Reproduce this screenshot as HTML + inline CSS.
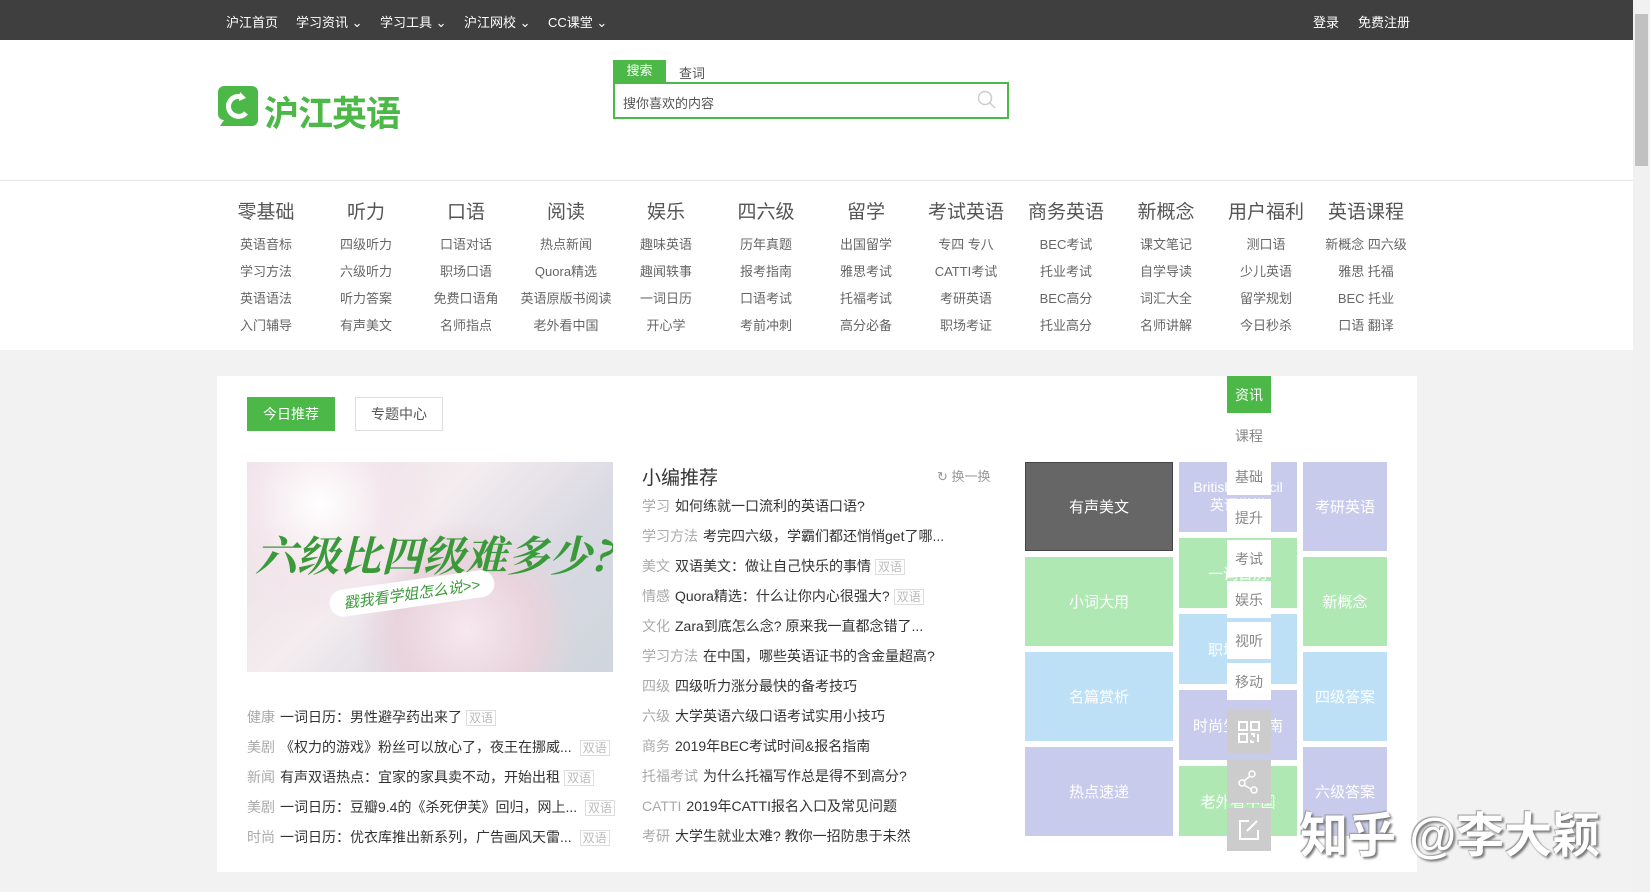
<!DOCTYPE html>
<html><head><meta charset="utf-8">
<style>
*{margin:0;padding:0;box-sizing:border-box}
body{width:1650px;height:892px;overflow:hidden;background:#f2f2f2;font-family:"Liberation Sans","Noto Sans CJK SC",sans-serif;position:relative;color:#333}
.a{position:absolute;white-space:nowrap}
.top{left:0;top:0;width:1633px;height:40px;background:#3f3f3f}
.top span{position:absolute;top:12px;color:#fff;font-size:13px}
.hdr{left:0;top:40px;width:1633px;height:310px;background:#fff;border-bottom:0}
.line{left:0;top:180px;width:1633px;height:1px;background:#e6e6e6}
.cat{font-size:19px;color:#555;text-align:center;width:110px}
.sub{font-size:13px;color:#666;text-align:center;width:110px}
.card{left:217px;top:376px;width:1200px;height:496px;background:#fff}
.r{font-size:14px;color:#333}
.r div{height:30px;line-height:30px;overflow:hidden}
.r i{font-style:normal;color:#aaa;margin-right:5px}
.r b{font-weight:normal;border:1px solid #ddd;color:#bbb;font-size:12px;padding:0 2px;margin-left:4px;display:inline-block;line-height:14px;vertical-align:middle}
.t{color:#fff;font-size:15px;display:flex;align-items:center;justify-content:center;text-align:center}
.sn{left:1227px;width:44px;height:37px;background:#fff;color:#888;font-size:14px;display:flex;align-items:center;justify-content:center}
</style></head><body>
<div class="a top">
<span style="left:226px">沪江首页</span>
<span style="left:296px">学习资讯 ⌄</span>
<span style="left:380px">学习工具 ⌄</span>
<span style="left:464px">沪江网校 ⌄</span>
<span style="left:548px">CC课堂 ⌄</span>
<span style="left:1313px">登录</span>
<span style="left:1358px">免费注册</span>
</div>
<div class="a hdr"></div>
<div class="a line" style="top:180px"></div>
<svg class="a" style="left:216px;top:84px" width="44" height="44" viewBox="0 0 44 44"><path d="M8 2h28a6 6 0 0 1 6 6v28a6 6 0 0 1-6 6H4l4-6a6 6 0 0 1-6-6V8a6 6 0 0 1 6-6z" fill="#4cb848"/><path d="M26 13a10 10 0 1 0 4 16" stroke="#fff" stroke-width="5" fill="none"/><path d="M24 8l6 6-7 3z" fill="#fff"/></svg>
<div class="a" style="left:264px;top:86px;font-size:35px;color:#4cb848;letter-spacing:-1px;font-weight:bold">沪江英语</div>
<div class="a" style="left:613px;top:60px;width:53px;height:22px;background:#4cb848;color:#fff;font-size:13px;text-align:center;line-height:22px">搜索</div>
<div class="a" style="left:679px;top:63px;font-size:13px;color:#555">查词</div>
<div class="a" style="left:613px;top:82px;width:396px;height:37px;border:2px solid #4cb848;background:#fff"></div>
<div class="a" style="left:623px;top:93px;font-size:13px;color:#555">搜你喜欢的内容</div>
<svg class="a" style="left:977px;top:90px" width="20" height="20"><circle cx="8" cy="8" r="6.5" stroke="#ccc" stroke-width="1.5" fill="none"/><path d="M13 13l5 5" stroke="#ccc" stroke-width="1.5"/></svg>
<div id="cats"></div>
<script>
var cats=[["零基础","英语音标","学习方法","英语语法","入门辅导"],["听力","四级听力","六级听力","听力答案","有声美文"],["口语","口语对话","职场口语","免费口语角","名师指点"],["阅读","热点新闻","Quora精选","英语原版书阅读","老外看中国"],["娱乐","趣味英语","趣闻轶事","一词日历","开心学"],["四六级","历年真题","报考指南","口语考试","考前冲刺"],["留学","出国留学","雅思考试","托福考试","高分必备"],["考试英语","专四 专八","CATTI考试","考研英语","职场考证"],["商务英语","BEC考试","托业考试","BEC高分","托业高分"],["新概念","课文笔记","自学导读","词汇大全","名师讲解"],["用户福利","测口语","少儿英语","留学规划","今日秒杀"],["英语课程","新概念 四六级","雅思 托福","BEC 托业","口语 翻译"]];
var h="",ys=[243,270,297,324];
cats.forEach(function(c,i){var x=211+i*100;h+='<div class="a cat" style="left:'+x+'px;top:197px">'+c[0]+'</div>';for(var j=1;j<5;j++)h+='<div class="a sub" style="left:'+x+'px;top:'+(ys[j-1]-9)+'px">'+c[j]+'</div>';});
document.getElementById("cats").innerHTML=h;
</script>
<div class="a card"></div>
<div class="a" style="left:247px;top:397px;width:88px;height:34px;background:#4cb848;color:#fff;font-size:14px;text-align:center;line-height:34px">今日推荐</div>
<div class="a" style="left:355px;top:397px;width:88px;height:34px;border:1px solid #ddd;color:#555;font-size:14px;text-align:center;line-height:32px">专题中心</div>
<div class="a" style="left:247px;top:462px;width:366px;height:210px;background:radial-gradient(circle at 20% 20%,#fff 0,#f3e6ec 20%,transparent 35%),radial-gradient(circle at 60% 80%,#f6e8ee 0,#e9d3dc 25%,transparent 40%),linear-gradient(135deg,#e8dde3,#f4ecef 40%,#d9d9e2 70%,#cfd6dc);overflow:hidden">
<div class="a" style="left:8px;top:62px;font-size:42px;color:#3a9a3a;font-family:'Noto Serif CJK SC',serif;font-style:italic;font-weight:bold">六级比四级难多少?</div>
<div class="a" style="left:82px;top:118px;background:#fff;border-radius:14px;padding:3px 14px;font-size:15px;color:#3a9a3a;transform:rotate(-8deg);font-style:italic">戳我看学姐怎么说>></div>
</div>
<div class="a" style="left:642px;top:463px;font-size:19px;color:#333">小编推荐</div>
<div class="a" style="left:937px;top:466px;font-size:13px;color:#999">↻ 换一换</div>
<div class="a r" style="left:642px;top:491px">
<div><i>学习</i>如何练就一口流利的英语口语?</div>
<div><i>学习方法</i>考完四六级，学霸们都还悄悄get了哪...</div>
<div><i>美文</i>双语美文：做让自己快乐的事情<b>双语</b></div>
<div><i>情感</i>Quora精选：什么让你内心很强大?<b>双语</b></div>
<div><i>文化</i>Zara到底怎么念? 原来我一直都念错了...</div>
<div><i>学习方法</i>在中国，哪些英语证书的含金量超高?</div>
<div><i>四级</i>四级听力涨分最快的备考技巧</div>
<div><i>六级</i>大学英语六级口语考试实用小技巧</div>
<div><i>商务</i>2019年BEC考试时间&amp;报名指南</div>
<div><i>托福考试</i>为什么托福写作总是得不到高分?</div>
<div><i>CATTI</i>2019年CATTI报名入口及常见问题</div>
<div><i>考研</i>大学生就业太难? 教你一招防患于未然</div>
</div>
<div class="a r" style="left:247px;top:702px">
<div><i>健康</i>一词日历：男性避孕药出来了<b>双语</b></div>
<div><i>美剧</i>《权力的游戏》粉丝可以放心了，夜王在挪威... <b>双语</b></div>
<div><i>新闻</i>有声双语热点：宜家的家具卖不动，开始出租<b>双语</b></div>
<div><i>美剧</i>一词日历：豆瓣9.4的《杀死伊芙》回归，网上... <b>双语</b></div>
<div><i>时尚</i>一词日历：优衣库推出新系列，广告画风天雷... <b>双语</b></div>
</div>
<div class="a t" style="left:1025px;top:462px;width:148px;height:89px;background:#666;border:1px solid #444">有声美文</div>
<div class="a t" style="left:1025px;top:557px;width:148px;height:89px;background:#b0e8b4">小词大用</div>
<div class="a t" style="left:1025px;top:652px;width:148px;height:89px;background:#bde0f6">名篇赏析</div>
<div class="a t" style="left:1025px;top:747px;width:148px;height:89px;background:#c8cbec">热点速递</div>
<div class="a t" style="left:1179px;top:462px;width:118px;height:70px;background:#c8cbec;font-size:14px">British Council<br>英语学堂</div>
<div class="a t" style="left:1179px;top:538px;width:118px;height:70px;background:#b0e8b4">一词日历</div>
<div class="a t" style="left:1179px;top:614px;width:118px;height:70px;background:#bde0f6">职场英语</div>
<div class="a t" style="left:1179px;top:690px;width:118px;height:70px;background:#c8cbec">时尚生活指南</div>
<div class="a t" style="left:1179px;top:766px;width:118px;height:70px;background:#b0e8b4">老外看中国</div>
<div class="a t" style="left:1303px;top:462px;width:84px;height:89px;background:#c8cbec">考研英语</div>
<div class="a t" style="left:1303px;top:557px;width:84px;height:89px;background:#b0e8b4">新概念</div>
<div class="a t" style="left:1303px;top:652px;width:84px;height:89px;background:#bde0f6">四级答案</div>
<div class="a t" style="left:1303px;top:747px;width:84px;height:89px;background:#c8cbec">六级答案</div>
<div class="a sn" style="top:376px;background:#4cb848;color:#fff">资讯</div>
<div class="a sn" style="top:417px">课程</div>
<div class="a sn" style="top:458px">基础</div>
<div class="a sn" style="top:499px">提升</div>
<div class="a sn" style="top:540px">考试</div>
<div class="a sn" style="top:581px">娱乐</div>
<div class="a sn" style="top:622px">视听</div>
<div class="a sn" style="top:663px">移动</div>
<div class="a sn" style="top:710px;height:43px;background:#ccc"><svg width="24" height="24" fill="none" stroke="#fff" stroke-width="2"><rect x="2" y="2" width="8" height="8"/><rect x="14" y="2" width="8" height="8"/><rect x="2" y="14" width="8" height="8"/><path d="M14 14h3v3M21 14v8M14 20v2h3"/></svg></div>
<div class="a sn" style="top:760px;height:43px;background:#ccc"><svg width="24" height="24" fill="none" stroke="#fff" stroke-width="1.5"><circle cx="15" cy="4" r="3"/><circle cx="5" cy="13" r="3"/><circle cx="17" cy="20" r="3"/><path d="M13 6l-6 5M7 15l7 4"/></svg></div>
<div class="a sn" style="top:808px;height:43px;background:#ccc"><svg width="24" height="24" fill="none" stroke="#fff" stroke-width="2"><path d="M12 3H3v18h18v-9"/><path d="M20 3L10 13"/></svg></div>
<div class="a" style="left:1300px;top:796px;font-size:48px;color:#fff;font-weight:bold;text-shadow:2px 2px 2px #777,-1px -1px 1px #999">知乎 @李大颖</div>
<div class="a" style="left:1633px;top:0;width:17px;height:892px;background:#f1f1f1"></div>
<div class="a" style="left:1635px;top:14px;width:13px;height:152px;background:#c1c1c1"></div>
</body></html>
